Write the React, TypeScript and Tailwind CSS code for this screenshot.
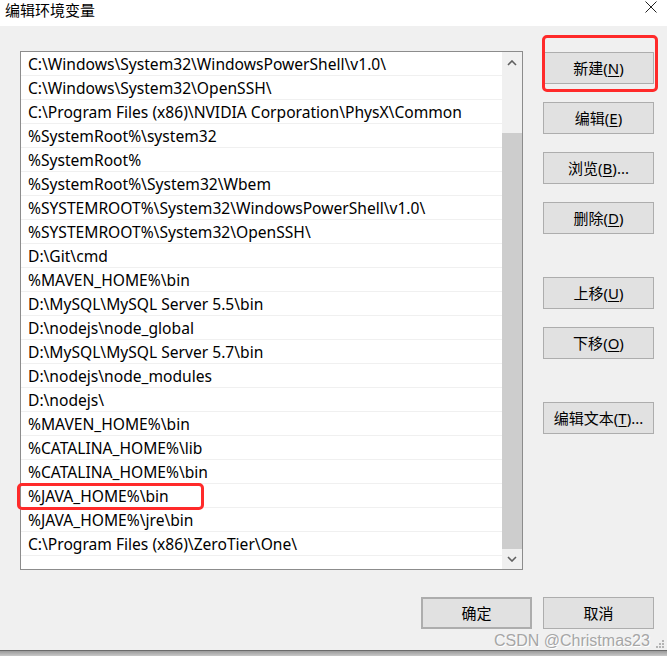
const paths = [
  "C:\\Windows\\System32\\WindowsPowerShell\\v1.0\\",
  "C:\\Windows\\System32\\OpenSSH\\",
  "C:\\Program Files (x86)\\NVIDIA Corporation\\PhysX\\Common",
  "%SystemRoot%\\system32",
  "%SystemRoot%",
  "%SystemRoot%\\System32\\Wbem",
  "%SYSTEMROOT%\\System32\\WindowsPowerShell\\v1.0\\",
  "%SYSTEMROOT%\\System32\\OpenSSH\\",
  "D:\\Git\\cmd",
  "%MAVEN_HOME%\\bin",
  "D:\\MySQL\\MySQL Server 5.5\\bin",
  "D:\\nodejs\\node_global",
  "D:\\MySQL\\MySQL Server 5.7\\bin",
  "D:\\nodejs\\node_modules",
  "D:\\nodejs\\",
  "%MAVEN_HOME%\\bin",
  "%CATALINA_HOME%\\lib",
  "%CATALINA_HOME%\\bin",
  "%JAVA_HOME%\\bin",
  "%JAVA_HOME%\\jre\\bin",
  "C:\\Program Files (x86)\\ZeroTier\\One\\",
];

const ui = { fontFamily: '"Noto Sans", "Noto Sans CJK SC", sans-serif' };

function WinButton({ label, hotkey, tail = "", className = "" }: { label: string; hotkey?: string; tail?: string; className?: string }) {
  return (
    <button
      className={`w-[111px] h-[32px] bg-[#e1e1e1] border border-[#adadad] text-[15px] text-black flex items-center justify-center leading-none ${className}`}
      style={ui}
    >
      {label}
      {hotkey && (
        <>
          (<span className="underline underline-offset-2">{hotkey}</span>){tail}
        </>
      )}
    </button>
  );
}

export default function App() {
  return (
    <div className="relative w-[667px] h-[656px] overflow-hidden bg-[#f0f0f0]" style={ui}>
      {/* title bar */}
      <div className="h-[26px] bg-white flex justify-between">
        <div className="pl-[5px] pt-[2px] text-[15px] leading-[16px] text-black">编辑环境变量</div>
        <svg width="12" height="12" viewBox="0 0 12 12" className="mr-[10px] mt-[1px]">
          <path d="M0.5 0.5 L11.5 11.5 M11.5 0.5 L0.5 11.5" stroke="#222" strokeWidth="1" />
        </svg>
      </div>

      <div className="flex pl-[20px] pt-[25px]">
        {/* list box */}
        <div className="w-[503px] h-[519px] border border-[#8c8c8c] bg-white flex">
          <div className="flex-1 flex flex-col">
            {paths.map((p, i) => (
              <div
                key={i}
                className="h-[24px] shrink-0 border-b border-[#f0f0f0] pl-[7px] pt-[2px] flex items-center text-[15.6px] text-black whitespace-nowrap"
              >
                {p}
              </div>
            ))}
          </div>
          {/* scrollbar */}
          <div className="w-[20px] bg-[#f0f0f0] flex flex-col">
            <div className="h-[21px] flex items-center justify-center">
              <svg width="10" height="6" viewBox="0 0 10 6">
                <path d="M1 5 L5 1 L9 5" stroke="#606060" strokeWidth="1.6" fill="none" />
              </svg>
            </div>
            <div className="h-[60px]" />
            <div className="flex-1 bg-[#cdcdcd]" />
            <div className="h-[20px] flex items-center justify-center">
              <svg width="10" height="6" viewBox="0 0 10 6">
                <path d="M1 1 L5 5 L9 1" stroke="#606060" strokeWidth="1.6" fill="none" />
              </svg>
            </div>
          </div>
        </div>

        {/* right buttons */}
        <div className="ml-[20px] pt-[1px] flex flex-col">
          <WinButton label="新建" hotkey="N" />
          <WinButton label="编辑" hotkey="E" className="mt-[18px]" />
          <WinButton label="浏览" hotkey="B" tail="..." className="mt-[18px]" />
          <WinButton label="删除" hotkey="D" className="mt-[18px]" />
          <WinButton label="上移" hotkey="U" className="mt-[43px]" />
          <WinButton label="下移" hotkey="O" className="mt-[18px]" />
          <WinButton label="编辑文本" hotkey="T" tail="..." className="mt-[43px]" />
        </div>
      </div>

      {/* bottom buttons */}
      <div className="flex justify-end gap-[11px] pr-[13px] mt-[27px]">
        <WinButton label="确定" className="border-2 border-[#0078d7]" />
        <WinButton label="取消" />
      </div>

      {/* watermark */}
      <div
        className="absolute left-[494px] top-[631px] text-[16px] leading-[20px] text-[#a6a6a6]"
        style={{ fontFamily: '"Liberation Sans", Arial, sans-serif', textShadow: "1px 1px 0 #ffffff" }}
      >
        CSDN @Christmas23
      </div>
      {/* resize grip */}
      <svg className="absolute left-[655px] top-[639px]" width="10" height="10" viewBox="0 0 10 10">
        <rect x="7" y="1" width="2" height="2" fill="#b4b4b4" />
        <rect x="4" y="4" width="2" height="2" fill="#b4b4b4" />
        <rect x="7" y="4" width="2" height="2" fill="#b4b4b4" />
        <rect x="1" y="7" width="2" height="2" fill="#b4b4b4" />
        <rect x="4" y="7" width="2" height="2" fill="#b4b4b4" />
        <rect x="7" y="7" width="2" height="2" fill="#b4b4b4" />
      </svg>

      {/* bottom edge */}
      <div className="absolute left-0 right-0 top-[650px] h-[6px] border-t border-[#6a6a6a] bg-gradient-to-b from-[#9a9a9a] to-[#c8c8c8]" />

      {/* red annotations */}
      <div className="absolute left-[542px] top-[35px] w-[116px] h-[57px] border-[3px] border-[#ff2a2a] rounded-[5px]" />
      <div className="absolute left-[17px] top-[483px] w-[187px] h-[27px] border-[3px] border-[#ff2a2a] rounded-[5px]" />
    </div>
  );
}
